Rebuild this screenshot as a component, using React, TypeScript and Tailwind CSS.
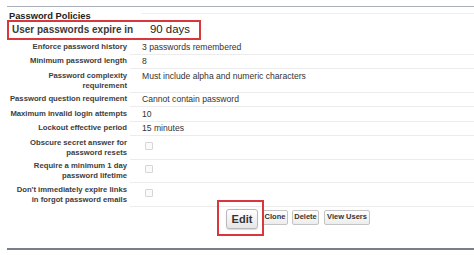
import React from "react";

type Row = { label: string[]; value?: string; checkbox?: boolean };

const rows: Row[] = [
  { label: ["Enforce password history"], value: "3 passwords remembered" },
  { label: ["Minimum password length"], value: "8" },
  { label: ["Password complexity", "requirement"], value: "Must include alpha and numeric characters" },
  { label: ["Password question requirement"], value: "Cannot contain password" },
  { label: ["Maximum invalid login attempts"], value: "10" },
  { label: ["Lockout effective period"], value: "15 minutes" },
  { label: ["Obscure secret answer for", "password resets"], checkbox: true },
  { label: ["Require a minimum 1 day", "password lifetime"], checkbox: true },
  { label: ["Don't immediately expire links", "in forgot password emails"], checkbox: true },
];

export default function App() {
  return (
    <div className="w-[474px] h-[255px] bg-white overflow-hidden font-['Liberation_Sans',Arial,sans-serif]">
      <div className="pt-[6px] pl-[7px]">
        <div className="h-[1px] bg-[#a9b0b9]" />
        <div className="flex h-[13px]">
          <div className="pl-[2px] pt-[3px] text-[9.3px] leading-[12px] font-bold text-[#222]">
            Password Policies
          </div>
          <div className="flex-1 ml-[50px] mt-[6px] border-t border-[#efefef]" />
        </div>
        <div className="w-[194px] h-[20px] border-2 border-[#d7373d] flex items-center">
          <span className="ml-[3px] w-[138px] text-[10px] font-bold text-[#3a3a3a] leading-none">
            User passwords expire in
          </span>
          <span className="text-[11.4px] text-[#222] leading-none">90 days</span>
        </div>
        <div className="flex flex-col">
          {rows.map((r, i) => (
            <div key={i} className="flex">
              <div className="w-[123px] pr-[3px] py-[1.75px] text-right text-[7.7px] leading-[10px] font-bold text-[#3d3d3d]">
                {r.label.map((l, j) => (
                  <div key={j}>{l}</div>
                ))}
              </div>
              <div className="flex-1 pl-[12px] py-[1.75px] border-b border-[#ececec] text-[8.6px] leading-[10px] text-[#333]">
                {r.checkbox ? (
                  <div className="ml-[3px] mt-[4px] w-[8px] h-[8px] border border-[#d6d6d6] bg-[#fafafa] rounded-[1px]" />
                ) : (
                  r.value
                )}
              </div>
            </div>
          ))}
        </div>
        <div className="flex items-start -mt-[1px] ml-[219px]">
          <div className="relative">
            <button className="w-[32px] h-[20px] rounded-[3px] border border-[#b9b9b9] bg-gradient-to-b from-white to-[#e6e6e6] text-[11px] font-bold text-[#333] leading-none shadow-[0_1px_1px_rgba(0,0,0,0.15)]">
              Edit
            </button>
            <div className="absolute -left-[9px] -top-[6px] -right-[6px] -bottom-[6px] border-2 border-[#d7373d] z-10" />
          </div>
          <button className="ml-[4px] mt-[4px] w-[26px] h-[15px] rounded-[2px] border border-[#c4c4c4] bg-gradient-to-b from-white to-[#ececec] text-[7.5px] font-bold text-[#333] leading-none">
            Clone
          </button>
          <button className="ml-[4px] mt-[4px] w-[27px] h-[15px] rounded-[2px] border border-[#c4c4c4] bg-gradient-to-b from-white to-[#ececec] text-[7.5px] font-bold text-[#333] leading-none">
            Delete
          </button>
          <button className="ml-[5px] mt-[4px] w-[46px] h-[15px] rounded-[2px] border border-[#c4c4c4] bg-gradient-to-b from-white to-[#ececec] text-[7.5px] font-bold text-[#333] leading-none">
            View Users
          </button>
        </div>
        <div className="mt-[18px] h-[2px] bg-[#777f8a]" />
      </div>
    </div>
  );
}
